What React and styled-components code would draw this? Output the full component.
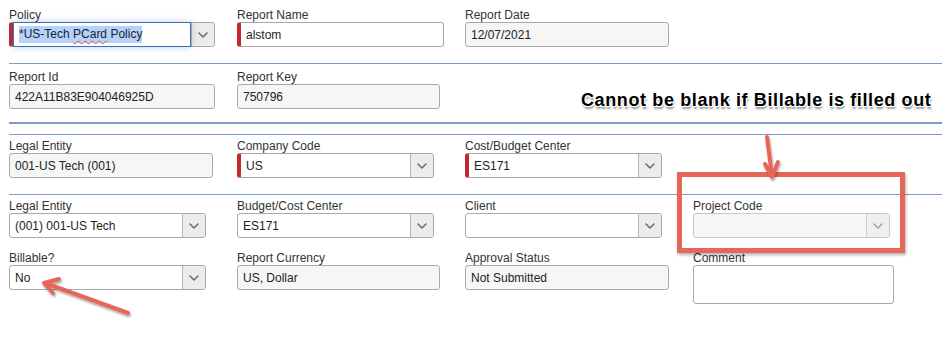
import React from "react";
import styled, { createGlobalStyle } from "styled-components";

const GlobalStyle = createGlobalStyle`
  html, body {
    margin: 0;
    padding: 0;
    background: #fff;
  }
  body {
    font-family: "Liberation Sans", Arial, Helvetica, sans-serif;
    color: #333;
  }
`;

const Chevron = ({ color = "#6e6e6e" }) => (
  <svg width="10" height="6" viewBox="0 0 10 6">
    <polyline points="1,1 5,5 9,1" fill="none" stroke={color} strokeWidth="1.6" strokeLinecap="round" strokeLinejoin="round" />
  </svg>
);

const Field = ({ label, width, value, required, select, readOnly, disabled, focused, tall, children }) => (
  <FieldWrap $width={width}>
    <Label>{label}</Label>
    <Box $required={required} $readOnly={readOnly} $disabled={disabled} $tall={tall}>
      <Value $focused={focused} $tall={tall}>{children || value}</Value>
      {select && (
        <SelectButton $disabled={disabled}>
          <Chevron color={disabled ? "#a5a5a5" : "#6e6e6e"} />
        </SelectButton>
      )}
    </Box>
  </FieldWrap>
);

export default function App() {
  return (
    <Page>
      <GlobalStyle />
      <Row>
        <Field label="Policy" width={206} select required focused>
          <Selected>*US-Tech <Squiggle>PCard</Squiggle> Policy</Selected>
        </Field>
        <Field label="Report Name" width={207} value="alstom" required />
        <Field label="Report Date" width={204} value="12/07/2021" readOnly />
      </Row>
      <Divider $top={16} $bottom={6} />
      <Row>
        <Field label="Report Id" width={206} value="422A11B83E904046925D" readOnly />
        <Field label="Report Key" width={203} value="750796" readOnly />
      </Row>
      <Divider $top={13} $bottom={10} $thick />
      <Divider $top={0} $bottom={4} />
      <Row>
        <Field label="Legal Entity" width={204} value="001-US Tech (001)" readOnly />
        <Field label="Company Code" width={197} value="US" select required />
        <Field label="Cost/Budget Center" width={197} value="ES171" select required />
      </Row>
      <Divider $top={16} $bottom={4} />
      <Row>
        <Field label="Legal Entity" width={197} value="(001) 001-US Tech" select />
        <Field label="Budget/Cost Center" width={197} value="ES171" select />
        <Field label="Client" width={197} value="" select />
        <Field label="Project Code" width={197} value="" select disabled />
      </Row>
      <Row $top={13}>
        <Field label="Billable?" width={197} value="No" select />
        <Field label="Report Currency" width={203} value="US, Dollar" readOnly />
        <Field label="Approval Status" width={204} value="Not Submitted" readOnly />
        <Field label="Comment" width={201} value="" tall />
      </Row>

      <Callout>Cannot be blank if Billable is filled out</Callout>
      <Highlight />
      <Arrows width="942" height="338" viewBox="0 0 942 338">
        <defs>
          <filter id="shadow" x="-20%" y="-20%" width="140%" height="140%">
            <feDropShadow dx="1" dy="2" stdDeviation="1.2" floodColor="#000" floodOpacity="0.35" />
          </filter>
        </defs>
        <g fill="none" stroke="#e8655a" strokeWidth="4" strokeLinecap="round" strokeLinejoin="round" filter="url(#shadow)">
          <path d="M767 137 L772 176 M765 164 L772 177 L778 162" />
          <path d="M128 313 L45 283 M59 279 L44 283 L53 293" />
        </g>
      </Arrows>
    </Page>
  );
}

const Page = styled.div`
  position: relative;
  width: 942px;
  height: 338px;
  padding-top: 8px;
  box-sizing: border-box;
  overflow: hidden;
`;

const Row = styled.div`
  display: grid;
  grid-template-columns: repeat(4, 228px);
  align-items: start;
  padding-left: 9px;
  margin-top: ${(p) => p.$top || 0}px;
`;

const FieldWrap = styled.div`
  width: ${(p) => p.$width}px;
  display: flex;
  flex-direction: column;
`;

const Label = styled.label`
  font-size: 12px;
  line-height: 14px;
  height: 14px;
  color: #333;
  white-space: nowrap;
`;

const Box = styled.div`
  display: flex;
  height: ${(p) => (p.$tall ? 39 : 25)}px;
  box-sizing: border-box;
  border: 1px solid ${(p) => (p.$disabled ? "#c8c8c8" : "#a9a9a9")};
  border-left: ${(p) => (p.$required ? "4px solid #c1272d" : `1px solid ${p.$disabled ? "#c8c8c8" : "#a9a9a9"}`)};
  border-radius: 3px;
  background: ${(p) => (p.$readOnly || p.$disabled ? "#f6f6f6" : "#fff")};
`;

const Value = styled.div`
  position: relative;
  flex: 1;
  display: flex;
  align-items: ${(p) => (p.$tall ? "flex-start" : "center")};
  padding: 1px 0 0 5px;
  font-size: 12px;
  line-height: 15px;
  color: #222;
  white-space: nowrap;
  ${(p) =>
    p.$focused &&
    `
    padding-top: 0;
    margin: -1px 0 -1px 0;
    border: 1px solid #3e6fb4;
    box-shadow: 0 0 7px rgba(62, 111, 180, 0.35);
    background: #fff;
    z-index: 1;
  `}
`;

const Selected = styled.span`
  background: #b3d3fc;
  padding: 1px 0;
`;

const Squiggle = styled.span`
  text-decoration: underline wavy #d9534f;
  text-decoration-thickness: 1px;
  text-underline-offset: 2px;
`;

const SelectButton = styled.div`
  width: 22px;
  flex: none;
  display: flex;
  align-items: center;
  justify-content: center;
  border-left: 1px solid ${(p) => (p.$disabled ? "#d0d0d0" : "#b5b5b5")};
  background: ${(p) => (p.$disabled ? "#efefef" : "#ececec")};
  border-radius: 0 2px 2px 0;
`;

const Divider = styled.div`
  margin: ${(p) => p.$top}px 0 ${(p) => p.$bottom}px 9px;
  height: ${(p) => (p.$thick ? 2 : 1)}px;
  background: #7c9cc8;
`;

const Callout = styled.div`
  position: absolute;
  left: 581px;
  top: 90px;
  font-size: 18px;
  font-weight: bold;
  letter-spacing: 0.62px;
  color: #000;
  white-space: nowrap;
  text-shadow:
    -1px -1px 0 #fff, 1px -1px 0 #fff, -1px 1px 0 #fff, 1px 1px 0 #fff,
    0 -1px 0 #fff, 0 1px 0 #fff, -1px 0 0 #fff, 1px 0 0 #fff,
    1px 3px 2px rgba(0, 0, 0, 0.45);
`;

const Highlight = styled.div`
  position: absolute;
  left: 677px;
  top: 172px;
  width: 228px;
  height: 81px;
  box-sizing: border-box;
  border: 5px solid #e8655a;
  box-shadow: 1px 2px 3px rgba(0, 0, 0, 0.3);
  pointer-events: none;
`;

const Arrows = styled.svg`
  position: absolute;
  left: 0;
  top: 0;
  pointer-events: none;
`;
